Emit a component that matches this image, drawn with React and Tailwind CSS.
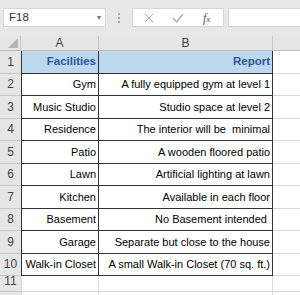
import React from "react";

const rows = [
  ["Facilities", "Report", true],
  ["Gym", "A fully equipped gym at level 1"],
  ["Music Studio", "Studio space at level 2"],
  ["Residence", "The interior will be  minimal"],
  ["Patio", "A wooden floored patio"],
  ["Lawn", "Artificial lighting at lawn"],
  ["Kitchen", "Available in each floor"],
  ["Basement", "No Basement intended "],
  ["Garage", "Separate but close to the house"],
  ["Walk-in Closet", "A small Walk-in Closet (70 sq. ft.)"],
];

const heights = ["h-[23px]", "h-[22px]", "h-[23px]", "h-[22px]", "h-[23px]", "h-[22px]", "h-[23px]", "h-[22px]", "h-[23px]", "h-[22px]"];

export default function App() {
  return (
    <div
      className="w-[300px] h-[295px] overflow-hidden bg-white text-[11px] text-black"
      style={{ fontFamily: '"Liberation Sans", Arial, sans-serif' }}
    >
      {/* formula bar */}
      <div className="h-[36px] bg-[#e8e8e8] flex items-start pt-[8px]">
        <div className="ml-[3px] w-[103px] h-[19px] bg-white border border-[#d6d6d6] flex items-center justify-between pl-[5px] pr-[4px]">
          <span className="text-[#333] text-[11.5px]">F18</span>
          <span className="text-[#777] text-[8px] leading-none">▾</span>
        </div>
        <div className="w-[26px] h-[19px] flex flex-col items-center justify-center gap-[2px]">
          <span className="w-[2px] h-[2px] bg-[#a8a8a8]"></span>
          <span className="w-[2px] h-[2px] bg-[#a8a8a8]"></span>
          <span className="w-[2px] h-[2px] bg-[#a8a8a8]"></span>
        </div>
        <div className="w-[92px] h-[19px] bg-white border border-[#d6d6d6] flex items-center">
          <svg width="10" height="10" viewBox="0 0 10 10" className="ml-[11px]">
            <path d="M1 1 L9 9 M9 1 L1 9" stroke="#a6a6a6" strokeWidth="1" fill="none" />
          </svg>
          <svg width="12" height="10" viewBox="0 0 12 10" className="ml-[18px]">
            <path d="M1 5 L4.5 9 L11 1" stroke="#a6a6a6" strokeWidth="1.2" fill="none" />
          </svg>
          <span
            className="ml-[19px] text-[12px] italic text-[#555] leading-none"
            style={{ fontFamily: '"Liberation Serif", "Times New Roman", serif' }}
          >
            f<span className="text-[9px]">x</span>
          </span>
        </div>
        <div className="ml-[4px] flex-1 h-[19px] bg-white border border-[#d6d6d6] border-r-0"></div>
      </div>

      {/* column headers */}
      <div className="h-[15px] flex bg-[#e6e6e6] border-b border-[#bdbdbd] text-[#444] text-[12px]">
        <div className="w-[21px] border-r border-[#c8c8c8] relative">
          <svg width="10" height="10" viewBox="0 0 10 10" className="absolute right-[2px] bottom-[2px]">
            <path d="M10 0 L10 10 L0 10 Z" fill="#b5b5b5" />
          </svg>
        </div>
        <div className="w-[78px] border-r border-[#c8c8c8] flex items-center justify-center">A</div>
        <div className="w-[174px] border-r border-[#c8c8c8] flex items-center justify-center">B</div>
        <div className="flex-1"></div>
      </div>

      {/* data rows */}
      {rows.map(([a, b, head], i) => (
        <div key={i} className={`flex ${heights[i]}`}>
          <div className="w-[21px] bg-[#e6e6e6] border-b border-[#c8c8c8] text-[#444] text-[12px] flex items-end justify-center pb-[2px]">
            {i + 1}
          </div>
          <div
            className={`w-[78px] border-l border-r border-b border-[#333] flex items-end justify-end pr-[2px] pb-[3px] whitespace-pre ${
              head ? "bg-[#bdd7ee] font-bold text-[#2f5597] text-[11.5px]" : ""
            }`}
          >
            {a}
          </div>
          <div
            className={`w-[174px] border-r border-b border-[#333] flex items-end justify-end pr-[2px] pb-[3px] whitespace-pre ${
              head ? "bg-[#bdd7ee] font-bold text-[#2f5597] text-[11.5px]" : ""
            }`}
          >
            {b}
          </div>
          <div className="flex-1 border-b border-[#dadada]"></div>
        </div>
      ))}

      {/* empty rows */}
      <div className="flex h-[16px]">
        <div className="w-[21px] bg-[#e6e6e6] border-b border-[#c8c8c8] text-[#444] text-[12px] flex items-end justify-center pb-[1px]">
          11
        </div>
        <div className="w-[78px] border-l border-r border-b border-[#dadada]"></div>
        <div className="w-[174px] border-r border-b border-[#dadada]"></div>
        <div className="flex-1 border-b border-[#dadada]"></div>
      </div>
      <div className="flex h-[20px]">
        <div className="w-[21px] bg-[#e6e6e6]"></div>
        <div className="w-[78px] border-l border-r border-[#dadada]"></div>
        <div className="w-[174px] border-r border-[#dadada]"></div>
        <div className="flex-1"></div>
      </div>
    </div>
  );
}
